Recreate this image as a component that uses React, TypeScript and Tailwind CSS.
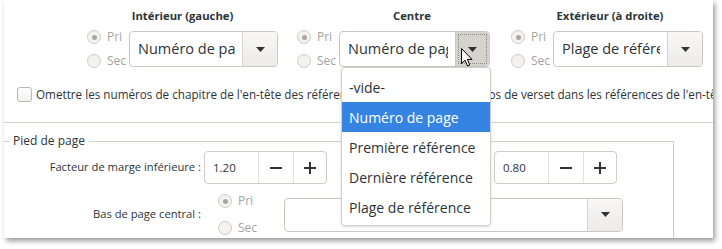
import React from 'react';

const ink = 'text-[#2e3436]';

function Arrow() {
  return (
    <svg width="9" height="5" viewBox="0 0 9 5">
      <path d="M0 0 H9 L4.5 5 Z" fill="#2e3436" />
    </svg>
  );
}

function Radio({ label, checked }: { label: string; checked?: boolean }) {
  return (
    <div className="flex items-center h-[18px] gap-[6px]">
      <span className="w-[14px] h-[14px] rounded-full border border-[#d0ccc7] bg-[#f3f2f1] flex items-center justify-center">
        {checked && <span className="w-[5px] h-[5px] rounded-full bg-[#a9a6a2]" />}
      </span>
      <span className="text-[12px] leading-none text-[#a5a3a0]">{label}</span>
    </div>
  );
}

function Combo({ text, pressed, className }: { text: string; pressed?: boolean; className: string }) {
  return (
    <div className={`flex border border-[#cdc7c2] rounded-[4px] overflow-hidden bg-white ${className}`}>
      <div className="flex-1 min-w-0 flex items-center pl-[8px] pr-[7px]">
        <div className={`overflow-hidden whitespace-nowrap text-[14.5px] ${ink}`}>{text}</div>
      </div>
      {pressed ? (
        <div className="w-[34px] border-l border-[#cdc7c2] bg-[#d6d2ce] p-[2px]">
          <div className="h-full border border-dotted border-[#8e8b87] flex items-center justify-center">
            <Arrow />
          </div>
        </div>
      ) : (
        <div className="w-[35px] border-l border-[#d8d4d0] bg-gradient-to-b from-[#f8f7f6] to-[#edebe9] flex items-center justify-center">
          <Arrow />
        </div>
      )}
    </div>
  );
}

function Group({ title, text, pressed, titleClass, className }: { title: string; text: string; pressed?: boolean; titleClass?: string; className: string }) {
  return (
    <div className={`flex flex-col ${className}`}>
      <div className={`h-[16px] text-[11.3px] leading-[16px] font-bold text-center ${ink} ${titleClass ?? ''}`}>{title}</div>
      <div className="flex mt-[7px]">
        <div className="w-[42px] flex flex-col gap-[6px] -mt-[3px]">
          <Radio label="Pri" checked />
          <Radio label="Sec" />
        </div>
        <Combo text={text} pressed={pressed} className="flex-1 h-[36px]" />
      </div>
    </div>
  );
}

function Check({ label, className }: { label: string; className?: string }) {
  return (
    <div className={`flex items-center gap-[4px] shrink-0 ${className ?? ''}`}>
      <span className="w-[15px] h-[15px] rounded-[3px] border border-[#bcb7b1] bg-gradient-to-b from-white to-[#f1f0ef]" />
      <span className={`text-[11.7px] whitespace-nowrap ${ink}`}>{label}</span>
    </div>
  );
}

function Spin({ value, className }: { value: string; className?: string }) {
  return (
    <div className={`flex w-[123px] h-[33px] border border-[#d0cbc6] rounded-[4px] bg-white ${className ?? ''}`}>
      <div className={`w-[53px] flex items-center pl-[8px] text-[11.5px] ${ink}`}>{value}</div>
      <div className="w-[35px] border-l border-[#e3e0dd] flex items-center justify-center">
        <svg width="12" height="2" viewBox="0 0 12 2"><rect width="12" height="2" fill="#2e3436" /></svg>
      </div>
      <div className="flex-1 border-l border-[#e3e0dd] flex items-center justify-center">
        <svg width="12" height="12" viewBox="0 0 12 12"><rect y="5" width="12" height="2" fill="#2e3436" /><rect x="5" width="2" height="12" fill="#2e3436" /></svg>
      </div>
    </div>
  );
}

const items = ['-vide-', 'Numéro de page', 'Première référence', 'Dernière référence', 'Plage de référence'];

export default function App() {
  return (
    <div className="w-[722px] h-[249px] bg-white overflow-hidden font-['Open_Sans',sans-serif]">
      <div className="relative ml-[4px] w-[709px] h-[238px] bg-white shadow-[2px_3px_5px_rgba(0,0,0,0.4)]">
        <div className="w-full h-full overflow-hidden">
          <div className="h-[76px] pt-[8px] flex">
            <Group title="Intérieur (gauche)" text="Numéro de page" className="ml-[83px] w-[191px]" />
            <Group title="Centre" text="Numéro de page" pressed titleClass="pl-[37px]" className="ml-[19px] w-[193px]" />
            <Group title="Extérieur (à droite)" text="Plage de référence" titleClass="pl-[6px]" className="ml-[21px] w-[192px]" />
          </div>

          <div className="mt-[10px] h-[18px] flex items-center pl-[13px]">
            <Check label="Omettre les numéros de chapitre de l'en-tête des références" />
            <Check label="Omettre les numéros de verset dans les références de l'en-tête" className="ml-[1px]" />
          </div>

          <div className="mt-[18px] border-t border-[#d6d2ce]" />

          <fieldset className="mt-[10px] -ml-[1px] w-[671px] border border-[#d3cfca] pb-[20px]">
            <legend className={`ml-[5px] px-[4px] text-[12px] leading-[16px] ${ink}`}>Pied de page</legend>
            <div className="flex items-center pt-[2px]">
              <div className={`w-[200px] pr-[3px] text-right text-[11.2px] ${ink}`}>Facteur de marge inférieure :</div>
              <Spin value="1.20" />
              <Spin value="0.80" className="ml-[167px]" />
            </div>
            <div className="flex items-center mt-[8px]">
              <div className={`w-[200px] pr-[3px] text-right text-[11.2px] ${ink}`}>Bas de page central :</div>
              <div className="ml-[14px] w-[66px] flex flex-col gap-[9px]">
                <Radio label="Pri" checked />
                <Radio label="Sec" />
              </div>
              <Combo text="" className="w-[339px] h-[34px]" />
            </div>
          </fieldset>
        </div>

        <div className="absolute left-[337px] top-[67px] w-[150px] h-[159px] border border-[#d3cfca] rounded-[4px] bg-white pt-[4px] shadow-[0_1px_3px_rgba(0,0,0,0.15)]">
          {items.map((t, i) => (
            <div
              key={t}
              className={`h-[30px] flex items-center pl-[7px] text-[14px] whitespace-nowrap ${i === 1 ? 'bg-[#3584e4] text-white' : ink}`}
            >
              {t}
            </div>
          ))}
        </div>

        <svg className="absolute left-[457px] top-[48px]" width="13" height="19" viewBox="0 0 13 19">
          <path d="M0.5 0.5 V15.5 L4 12.2 L6.6 18 L8.8 17 L6.3 11.4 H11 Z" fill="#fff" stroke="#000" strokeWidth="1" strokeLinejoin="round" />
        </svg>
      </div>
    </div>
  );
}
